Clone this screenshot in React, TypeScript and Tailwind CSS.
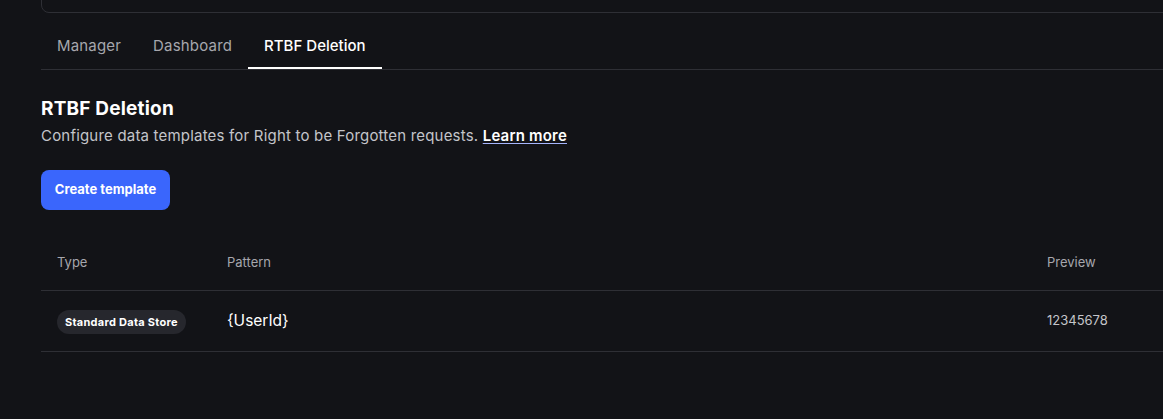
import React from 'react';

const tabs = ['Manager', 'Dashboard', 'RTBF Deletion'];

const App = () => {
  return (
    <div
      className="h-[419px] w-[1163px] overflow-hidden bg-[#121317] text-white"
      style={{ fontFamily: 'Inter, "Noto Sans", sans-serif' }}
    >
      <div className="pl-[41px]">
        {/* top card, mostly scrolled off */}
        <div className="-mt-[40px] h-[53px] w-[1200px] rounded-lg border border-[#2e2f35]" />

        <div className="mt-[22px] flex h-[35px] w-[1200px] items-start border-b border-[#2e2f35]">
          {tabs.map((t) => {
            const active = t === 'RTBF Deletion';
            return (
              <div
                key={t}
                className={
                  active
                    ? 'relative px-4 text-[15px] font-medium leading-[22px] text-white'
                    : 'relative px-4 text-[15px] leading-[22px] tracking-[0.012em] text-[#a6a7ad]'
                }
              >
                {t}
                {active && <div className="absolute left-0 right-0 top-[32px] h-[2px] bg-white" />}
              </div>
            );
          })}
        </div>

        <h2 className="mt-[27px] text-[19px] font-bold leading-[24px] tracking-[0.01em]">RTBF Deletion</h2>
        <p className="mt-[4px] text-[15px] leading-[22px] tracking-[0.013em] text-[#c4c5ca]">
          Configure data templates for Right to be Forgotten requests.{' '}
          <a className="font-semibold text-white underline decoration-[#a5b4fc] underline-offset-2">Learn more</a>
        </p>

        <button className="mt-[23px] h-[40px] w-[129px] rounded-lg bg-[#3a66fc] text-[13px] font-bold text-white">
          Create template
        </button>

        <div className="mt-[25px] w-[1200px]">
          <div className="grid h-[56px] grid-cols-[186px_820px_1fr] items-center border-b border-[#2e2f35] text-[13px] text-[#a6a7ad]">
            <div className="pl-4">Type</div>
            <div>Pattern</div>
            <div>Preview</div>
          </div>
          <div className="grid h-[61px] grid-cols-[186px_820px_1fr] items-center border-b border-[#2e2f35]">
            <div className="pl-4">
              <span className="inline-flex h-[24px] items-center rounded-full bg-[#26272d] px-[8px] text-[11px] font-bold tracking-[0.025em] text-white">
                Standard Data Store
              </span>
            </div>
            <div className="text-[15.5px] text-white">{'{UserId}'}</div>
            <div className="text-[13px] text-[#c4c5ca]">12345678</div>
          </div>
        </div>
      </div>
    </div>
  );
};

export default App;
